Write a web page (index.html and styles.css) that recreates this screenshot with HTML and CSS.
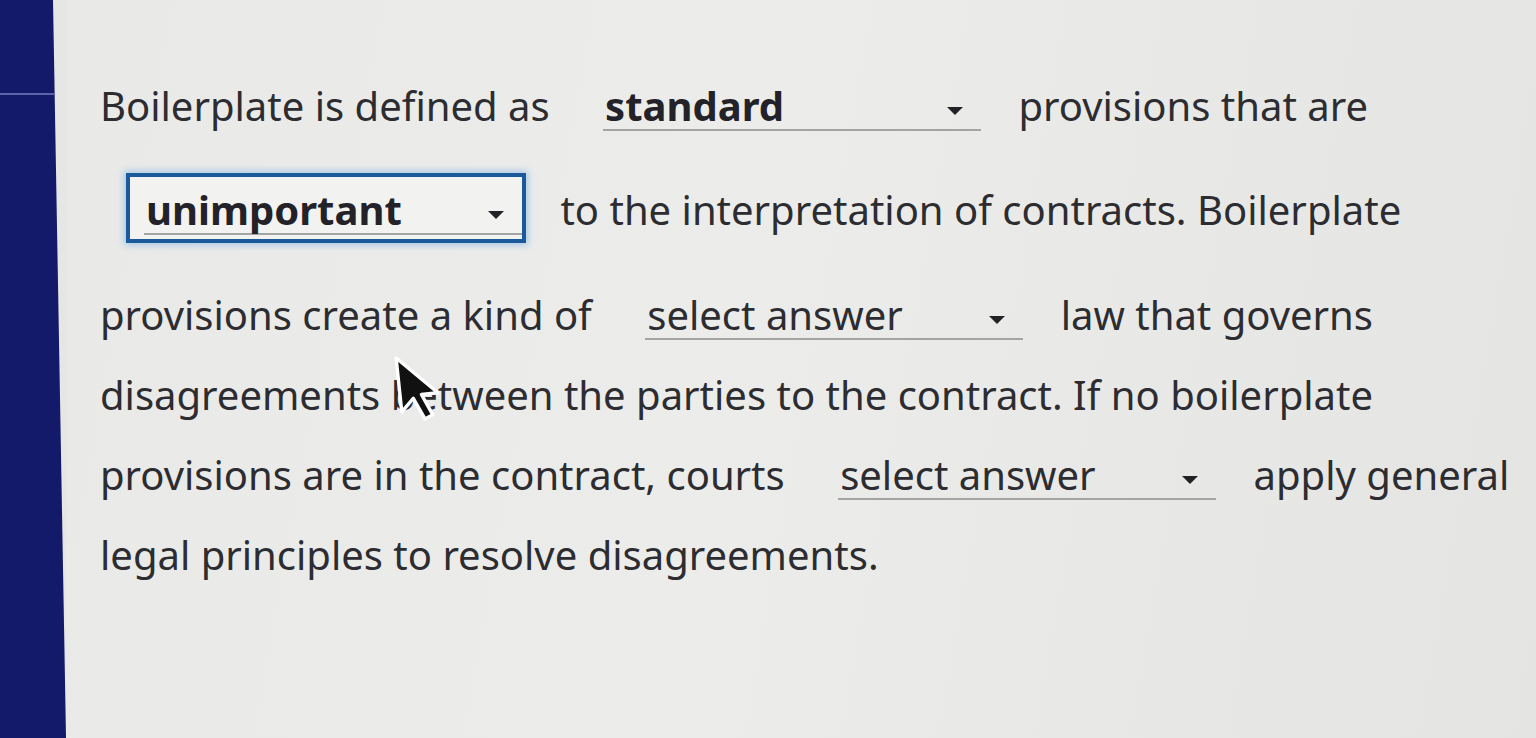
FILE: index.html
```html
<!DOCTYPE html>
<html lang="en">
<head>
<meta charset="utf-8">
<title>Boilerplate</title>
<link rel="stylesheet" href="styles.css">
</head>
<body>
<div class="page">
  <aside class="sidebar"><span class="sidebar-rule"></span></aside>
  <main class="content">
    <p class="question">Boilerplate is defined as <span class="dd-wrap"><span class="dd filled">standard<span class="caret"></span></span></span> provisions that are <span class="dd-wrap is-focused"><span class="dd filled">unimportant<span class="caret"></span></span></span> to the interpretation of contracts. Boilerplate provisions create a kind of <span class="dd-wrap"><span class="dd">select answer<span class="caret"></span></span></span> law that governs disagreements between the parties to the contract. If no boilerplate provisions are in the contract, courts <span class="dd-wrap"><span class="dd">select answer<span class="caret"></span></span></span> apply general legal principles to resolve disagreements.</p>
    <svg class="cursor" width="44" height="72" viewBox="0 0 13 21" aria-hidden="true">
      <path d="M1 1 L1 17 L4.8 13.4 L7.6 19.8 L10 18.8 L7.3 12.5 L12.2 12.5 Z" fill="#111" stroke="#fff" stroke-width="1" stroke-linejoin="round"/>
    </svg>
  </main>
</div>
</body>
</html>
```
FILE: styles.css
```css
html, body {
  margin: 0;
  padding: 0;
  height: 100%;
  overflow: hidden;
}
body {
  background: #e6e7e5;
  font-family: "Noto Sans", "Open Sans", sans-serif;
  color: #2c2c31;
}
.page {
  display: flex;
  height: 738px;
}
.sidebar {
  position: relative;
  width: 66px;
  flex: 0 0 66px;
  background: #131a69;
  clip-path: polygon(0 0, 53px 0, 66px 100%, 0 100%);
}
.sidebar-rule {
  position: absolute;
  left: 0;
  right: 0;
  top: 93px;
  height: 2px;
  background: #5a62aa;
}
.content {
  position: relative;
  flex: 1;
  padding: 66px 0 0 34px;
  background: linear-gradient(100deg, #e9eae8 0%, #ecedeb 45%, #e4e5e3 100%);
}
.question {
  margin: 0;
  width: 1414px;
  font-size: 40px;
  line-height: 80px;
}
.dd-wrap {
  display: inline-block;
  margin: 0 24px 0 26px;
  padding: 10px 0 4px 14px;
  border: 3px solid transparent;
  line-height: 1.15;
}
.dd-wrap.is-focused {
  margin-top: 27px;
  margin-bottom: 32px;
  border: 4px solid #1b5a9a;
  background: #f2f3f1;
  box-shadow: 0 0 7px 2px rgba(110, 170, 225, 0.55);
}
.dd {
  position: relative;
  display: inline-block;
  width: 376px;
  padding-left: 2px;
  border-bottom: 2px solid #a3a4a4;
  white-space: nowrap;
}
.dd.filled {
  font-weight: 700;
  color: #232228;
}
.caret {
  position: absolute;
  right: 18px;
  bottom: 14px;
  width: 0;
  height: 0;
  border-left: 8px solid transparent;
  border-right: 8px solid transparent;
  border-top: 8px solid #222226;
}
.cursor {
  position: absolute;
  left: 330px;
  top: 352px;
  transform: rotate(-6deg);
}
```
